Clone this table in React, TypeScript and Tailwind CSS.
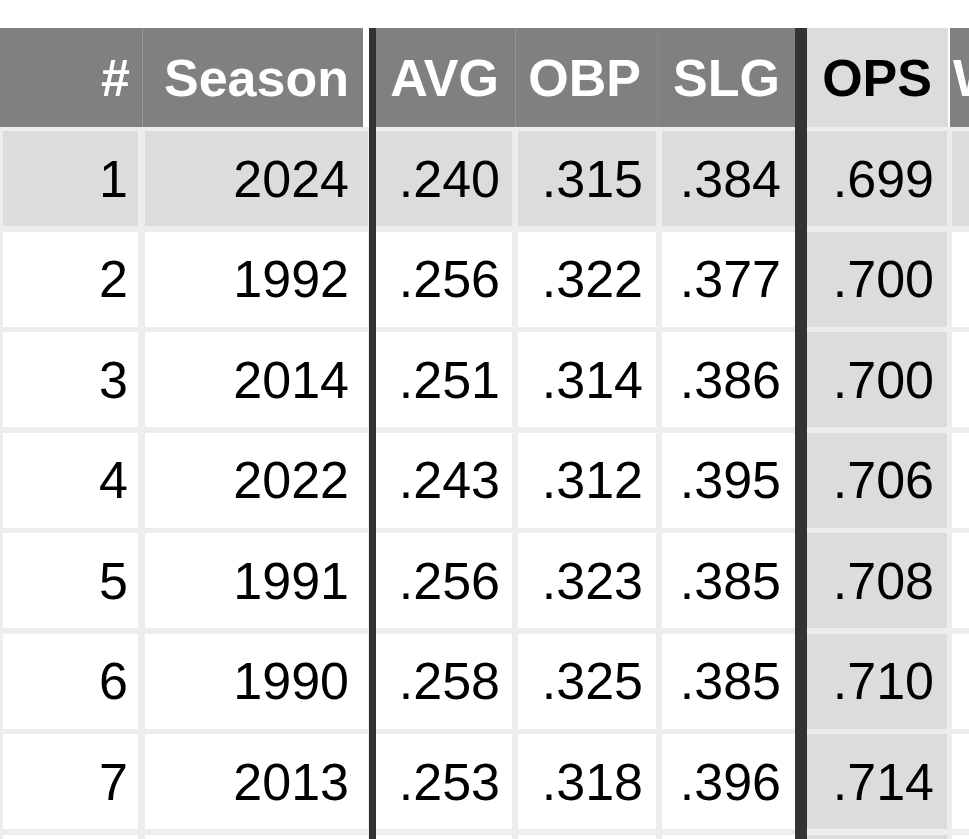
import React from 'react';

type Season = { rank: string; year: string; avg: string; obp: string; slg: string; ops: string };

const seasons: Season[] = [
  { rank: '1', year: '2024', avg: '.240', obp: '.315', slg: '.384', ops: '.699' },
  { rank: '2', year: '1992', avg: '.256', obp: '.322', slg: '.377', ops: '.700' },
  { rank: '3', year: '2014', avg: '.251', obp: '.314', slg: '.386', ops: '.700' },
  { rank: '4', year: '2022', avg: '.243', obp: '.312', slg: '.395', ops: '.706' },
  { rank: '5', year: '1991', avg: '.256', obp: '.323', slg: '.385', ops: '.708' },
  { rank: '6', year: '1990', avg: '.258', obp: '.325', slg: '.385', ops: '.710' },
  { rank: '7', year: '2013', avg: '.253', obp: '.318', slg: '.396', ops: '.714' },
  // next row only peeks in at the bottom edge
  { rank: '', year: '', avg: '', obp: '', slg: '', ops: '' },
];

const HeaderRow = () => (
  <div className="flex h-[99px] mt-[28px] font-bold text-white">
    <div className="w-[142px] shrink-0 bg-[#808080] flex items-center justify-end pr-[12px]">#</div>
    <div className="w-[1px] shrink-0 bg-[#9a9a9a]" />
    <div className="w-[220px] shrink-0 bg-[#808080] flex items-center justify-end pr-[14px]">Season</div>
    <div className="w-[6px] shrink-0 bg-white" />
    <div className="w-[7px] shrink-0 bg-[#333333]" />
    <div className="w-[139px] shrink-0 bg-[#808080] flex items-center justify-end pr-[16px]">AVG</div>
    <div className="w-[1px] shrink-0 bg-[#949494]" />
    <div className="w-[141px] shrink-0 bg-[#808080] flex items-center justify-end pr-[16px]">OBP</div>
    <div className="w-[1px] shrink-0 bg-[#8a8a8a]" />
    <div className="w-[137px] shrink-0 bg-[#808080] flex items-center justify-end pr-[15px]">SLG</div>
    <div className="w-[12px] shrink-0 bg-[#333333]" />
    <div className="w-[141px] shrink-0 bg-[#dcdcdc] text-black flex items-center justify-end pr-[16px]">OPS</div>
    <div className="w-[2px] shrink-0 bg-white" />
    <div className="w-[140px] shrink-0 bg-[#808080] flex items-center justify-start pl-[3px]">WAR</div>
  </div>
);

const SeasonRow = ({ s }: { s: Season }) => {
  const bg = s.rank === '1' ? 'bg-[#dcdcdc]' : 'bg-white';
  const cell = 'mt-[4px] h-[95px] shrink-0 flex items-center justify-end';
  return (
    <div className="flex items-start h-[100.5px] bg-[#ededed]">
      <div className={`${cell} ${bg} ml-[3px] w-[135px] pr-[10px]`}>{s.rank}</div>
      <div className={`${cell} ${bg} ml-[7px] w-[223px] pr-[19px]`}>{s.year}</div>
      <div className="self-stretch ml-[1px] w-[7px] shrink-0 bg-[#333333]" />
      <div className={`${cell} ${bg} w-[136px] pr-[12px]`}>{s.avg}</div>
      <div className={`${cell} ${bg} ml-[6px] w-[138px] pr-[13px]`}>{s.obp}</div>
      <div className={`${cell} ${bg} ml-[6px] w-[133px] pr-[14px]`}>{s.slg}</div>
      <div className="self-stretch w-[12px] shrink-0 bg-[#333333]" />
      <div className={`${cell} bg-[#dcdcdc] w-[140px] pr-[13px]`}>{s.ops}</div>
      <div className={`${cell} ${bg} ml-[5px] w-[140px]`} />
    </div>
  );
};

export default function App() {
  return (
    <div className="w-[969px] h-[839px] overflow-hidden bg-white font-['Liberation_Sans',Arial,sans-serif] text-[52px] leading-none text-black">
      <HeaderRow />
      {seasons.map((s, i) => (
        <SeasonRow key={i} s={s} />
      ))}
    </div>
  );
}
